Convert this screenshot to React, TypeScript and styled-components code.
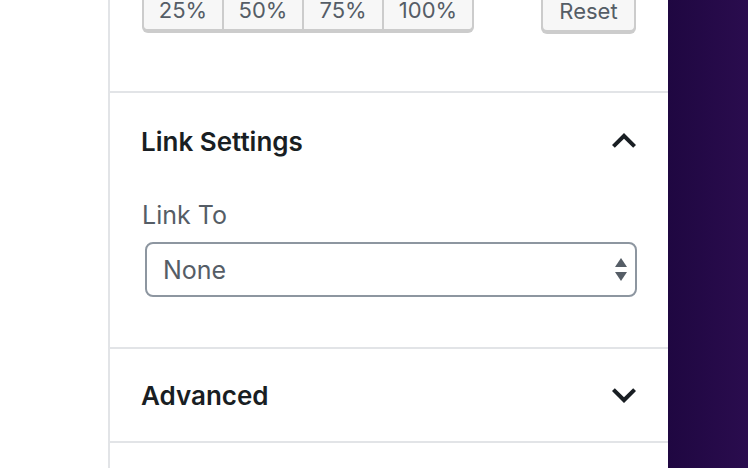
import styled, { createGlobalStyle } from "styled-components";

const GlobalStyle = createGlobalStyle`
  html, body {
    margin: 0;
    padding: 0;
    background: #ffffff;
  }
  body {
    font-family: Inter, "Liberation Sans", sans-serif;
    -webkit-font-smoothing: antialiased;
  }
`;

const ChevronUp = () => (
  <Icon viewBox="0 0 24 24">
    <path d="M12 8l-6 6 1.41 1.41L12 10.83l4.59 4.58L18 14z" />
  </Icon>
);

const ChevronDown = () => (
  <Icon viewBox="0 0 24 24">
    <path d="M16.59 8.59L12 13.17 7.41 8.59 6 10l6 6 6-6z" />
  </Icon>
);

const sizes = ["25%", "50%", "75%", "100%"];

export default function App() {
  return (
    <>
      <GlobalStyle />
      <Page>
        <Gutter />
        <Sidebar>
          <SizeSection>
            <ButtonGroup>
              {sizes.map((s) => (
                <SizeButton key={s} $wide={s === "100%"}>
                  {s}
                </SizeButton>
              ))}
            </ButtonGroup>
            <ResetButton>Reset</ResetButton>
          </SizeSection>

          <Panel>
            <PanelHeader $height={96}>
              <Title>Link Settings</Title>
              <ChevronUp />
            </PanelHeader>
            <PanelBody>
              <Label>Link To</Label>
              <Select>
                <SelectValue>None</SelectValue>
                <Arrows>
                  <ArrowUp />
                  <ArrowDown />
                </Arrows>
              </Select>
            </PanelBody>
          </Panel>

          <Panel>
            <PanelHeader $height={92}>
              <Title>Advanced</Title>
              <ChevronDown />
            </PanelHeader>
          </Panel>

          <Rest />
        </Sidebar>
        <Backdrop />
      </Page>
    </>
  );
}

const Page = styled.div`
  display: flex;
  width: 748px;
  height: 468px;
  overflow: hidden;
  background: #ffffff;
`;

const Gutter = styled.div`
  width: 108px;
  flex-shrink: 0;
  border-right: 2px solid #e2e4e7;
`;

const Sidebar = styled.aside`
  width: 558px;
  flex-shrink: 0;
  display: flex;
  flex-direction: column;
  background: #ffffff;
`;

const SizeSection = styled.div`
  margin-top: -11px;
  padding: 0 32px 59px 32px;
  display: flex;
  justify-content: space-between;
  align-items: flex-start;
  border-bottom: 2px solid #e2e4e7;
`;

const ButtonGroup = styled.div`
  display: flex;
  border: 2px solid #cccccc;
  border-radius: 6px;
  box-shadow: 0 2px 0 #cccccc;
  background: #f7f7f7;
  overflow: hidden;
`;

const SizeButton = styled.div<{ $wide?: boolean }>`
  width: ${(p) => (p.$wide ? "88px" : "78px")};
  height: 38px;
  display: flex;
  align-items: center;
  justify-content: center;
  font-size: 22px;
  color: #555d66;
  background: #f7f7f7;
  & + & {
    border-left: 2px solid #cccccc;
  }
`;

const ResetButton = styled.div`
  width: 91px;
  height: 39px;
  display: flex;
  align-items: center;
  justify-content: center;
  border: 2px solid #cccccc;
  border-radius: 6px;
  box-shadow: 0 2px 0 #cccccc;
  background: #f7f7f7;
  font-size: 22px;
  color: #555d66;
`;

const Panel = styled.section`
  border-bottom: 2px solid #e2e4e7;
`;

const PanelHeader = styled.div<{ $height: number }>`
  height: ${(p) => p.$height}px;
  padding: 0 20px 0 31px;
  display: flex;
  align-items: center;
  justify-content: space-between;
`;

const Title = styled.h2`
  margin: 0;
  font-size: 26px;
  font-weight: 600;
  color: #191e23;
`;

const Icon = styled.svg`
  width: 48px;
  height: 48px;
  fill: #191e23;
`;

const PanelBody = styled.div`
  padding: 0 31px 50px 32px;
  display: flex;
  flex-direction: column;
`;

const Label = styled.label`
  font-size: 25px;
  line-height: 28px;
  color: #555d66;
  margin-top: 12px;
  margin-bottom: 13px;
`;

const Select = styled.div`
  margin-left: 3px;
  height: 51px;
  border: 2px solid #8d96a0;
  border-radius: 8px;
  display: flex;
  align-items: center;
  justify-content: space-between;
  padding: 0 8px 0 16px;
`;

const SelectValue = styled.span`
  font-size: 25px;
  color: #555d66;
`;

const Arrows = styled.span`
  display: flex;
  flex-direction: column;
  gap: 5px;
`;

const ArrowUp = styled.span`
  width: 0;
  height: 0;
  border-left: 6px solid transparent;
  border-right: 6px solid transparent;
  border-bottom: 9px solid #555d66;
`;

const ArrowDown = styled.span`
  width: 0;
  height: 0;
  border-left: 6px solid transparent;
  border-right: 6px solid transparent;
  border-top: 9px solid #555d66;
`;

const Rest = styled.div`
  flex: 1;
`;

const Backdrop = styled.div`
  flex: 1;
  background: linear-gradient(90deg, #1f0741, #2a0c4e);
`;
